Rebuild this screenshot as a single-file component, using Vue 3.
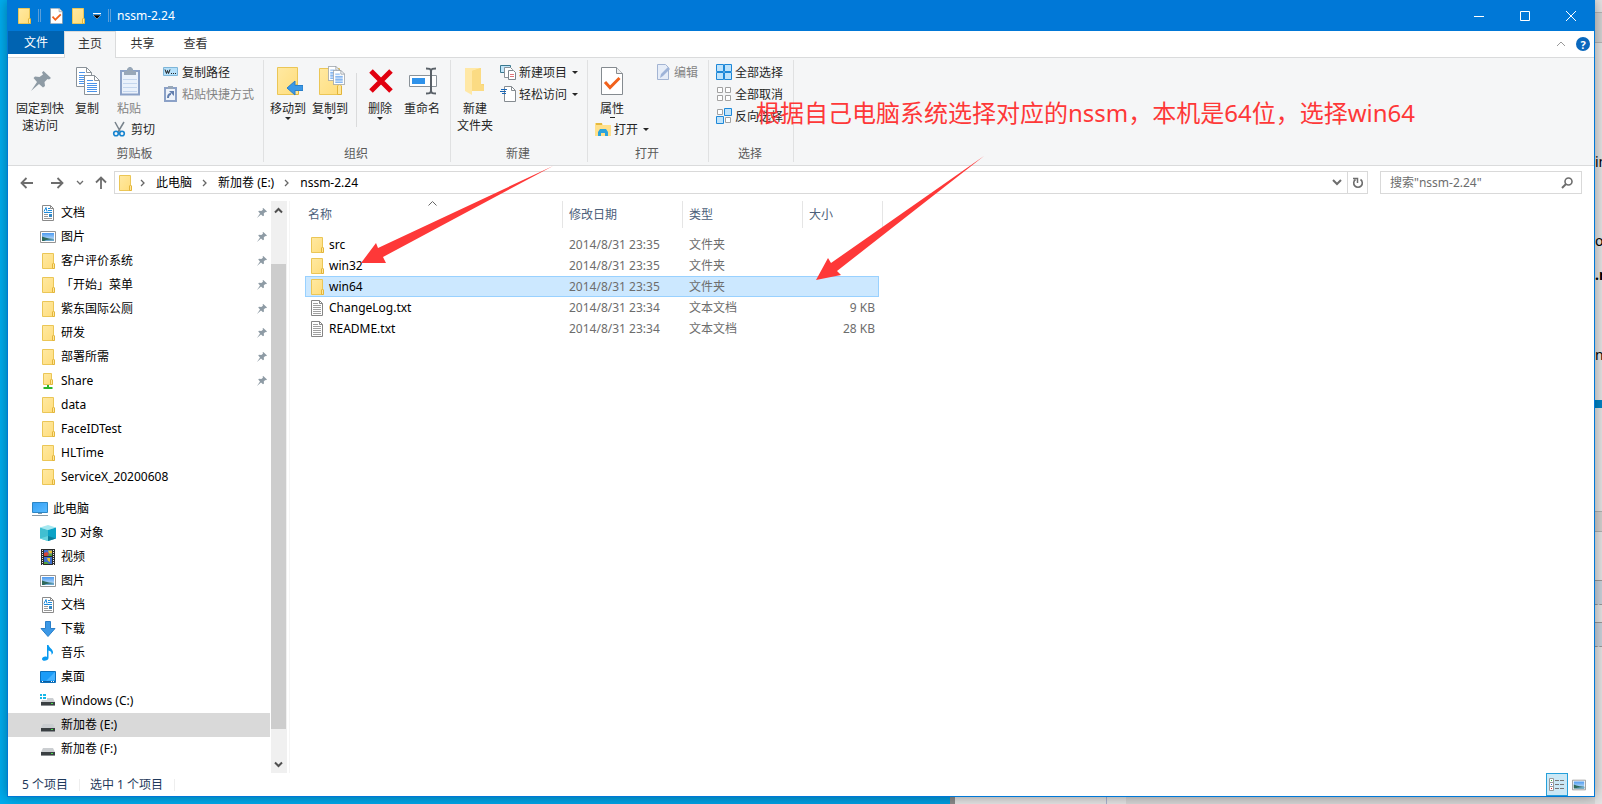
<script setup>
    import { ref } from 'vue'

    // 功能区选项卡
    const tabs = ['文件', '主页', '共享', '查看'];
    const activeTab = ref('主页');

    // 地址栏路径
    const crumbs = ['此电脑', '新加卷 (E:)', 'nssm-2.24'];
    const keyword = ref('');

    // 快速访问
    const quickItems = [
        { name: '文档', icon: 'doc', pinned: true },
        { name: '图片', icon: 'picture', pinned: true },
        { name: '客户评价系统', icon: 'folder', pinned: true },
        { name: '「开始」菜单', icon: 'folder', pinned: true },
        { name: '紫东国际公厕', icon: 'folder', pinned: true },
        { name: '研发', icon: 'folder', pinned: true },
        { name: '部署所需', icon: 'folder', pinned: true },
        { name: 'Share', icon: 'share', pinned: true },
        { name: 'data', icon: 'folder' },
        { name: 'FaceIDTest', icon: 'folder' },
        { name: 'HLTime', icon: 'folder' },
        { name: 'ServiceX_20200608', icon: 'folder' },
    ];

    // 此电脑
    const pcItems = [
        { name: '此电脑', icon: 'pc', root: true },
        { name: '3D 对象', icon: 'cube' },
        { name: '视频', icon: 'video' },
        { name: '图片', icon: 'picture' },
        { name: '文档', icon: 'doc' },
        { name: '下载', icon: 'download' },
        { name: '音乐', icon: 'music' },
        { name: '桌面', icon: 'desktop' },
        { name: 'Windows (C:)', icon: 'windisk' },
        { name: '新加卷 (E:)', icon: 'disk', current: true },
        { name: '新加卷 (F:)', icon: 'disk' },
    ];

    const files = [
        { name: 'src', icon: 'folder', date: '2014/8/31 23:35', type: '文件夹', size: '' },
        { name: 'win32', icon: 'folder', date: '2014/8/31 23:35', type: '文件夹', size: '' },
        { name: 'win64', icon: 'folder', date: '2014/8/31 23:35', type: '文件夹', size: '' },
        { name: 'ChangeLog.txt', icon: 'txt', date: '2014/8/31 23:34', type: '文本文档', size: '9 KB' },
        { name: 'README.txt', icon: 'txt', date: '2014/8/31 23:34', type: '文本文档', size: '28 KB' },
    ];
    const selected = ref('win64');
</script>

<template>
    <div class="screen">
        <!-- 图标定义 -->
        <svg class="defs" width="0" height="0" aria-hidden="true">
            <defs>
                <linearGradient id="g-folder" x1="0" y1="0" x2="1" y2="1">
                    <stop offset="0" stop-color="#ffe9a2" /><stop offset="1" stop-color="#ffdd7c" />
                </linearGradient>
                <linearGradient id="g-blue" x1="0" y1="0" x2="1" y2="1">
                    <stop offset="0" stop-color="#35a0f5" /><stop offset="1" stop-color="#5bbcff" />
                </linearGradient>
                <linearGradient id="g-sky" x1="0" y1="0" x2="0" y2="1">
                    <stop offset="0" stop-color="#4c9af0" /><stop offset="1" stop-color="#d6ecfb" />
                </linearGradient>
            </defs>
            <symbol id="folder" viewBox="0 0 16 16">
                <path d="M2.500 .5h11v10.500h.5v4.500H2.500z" fill="url(#g-folder)" stroke="#ebc656" />
                <path d="M12.500 15.500v-4.500l1-1 1 1v4.500z" fill="#ffe79a" stroke="#e3b53a" />
            </symbol>
            <symbol id="share" viewBox="0 0 16 16">
                <path d="M3.500.5h8v11h-8z" fill="url(#g-folder)" stroke="#ebc656" />
                <path d="M10.500 11.500V7l1-1 1 1v4.500z" fill="#ffe79a" stroke="#e3b53a" />
                <path d="M7 12h2v2h3.500v2h-9v-2H7z" fill="#2bb52b" />
            </symbol>
            <symbol id="doc" viewBox="0 0 16 16">
                <path d="M2.500.5h8l3 3v12h-11z" fill="#fff" stroke="#8a8a8a" />
                <path d="M10.500.5v3h3" fill="none" stroke="#8a8a8a" />
                <path d="M4 6.500l2-4 1 4M8 3.500h2M8 5.500h4M4 7.500h8" fill="none" stroke="#1d8bdb" />
                <path d="M4 9.500h4M4 11.500h4M4 13.500h8" stroke="#999" />
                <path d="M9 9h3v3H9z" fill="#3487c4" />
            </symbol>
            <symbol id="txt" viewBox="0 0 16 16">
                <path d="M2.500.5h8l3 3v12h-11z" fill="#fff" stroke="#858585" />
                <path d="M10.500.5v3h3" fill="none" stroke="#858585" />
                <path d="M4 3.500h5M4 5.500h8M4 7.500h8M4 9.500h8M4 11.500h8M4 13.500h8" stroke="#a0a0a0" />
            </symbol>
            <symbol id="picture" viewBox="0 0 16 16">
                <path d="M.5 2.500h15v11H.5z" fill="#fff" stroke="#949494" />
                <path d="M2 4h12v8H2z" fill="url(#g-sky)" />
                <path d="M2 7.500l3 1 4 1 5 .5v2H2z" fill="#2f6a5c" />
                <path d="M6 11l8-1v2H4z" fill="#6da9cf" />
            </symbol>
            <symbol id="pc" viewBox="0 0 16 16">
                <path d="M.5 1.500h15v10H.5z" fill="url(#g-blue)" stroke="#2c86c4" />
                <path d="M6 12h4v1H6z" fill="#7d98ab" />
                <path d="M0 14.500h16" stroke="#8799a6" />
            </symbol>
            <symbol id="cube" viewBox="0 0 16 16">
                <path d="M0 2.500L8 0l8 2.500L8 5z" fill="#a6e8f0" />
                <path d="M0 2.500L8 5v11l-8-2.500z" fill="#41bfd1" />
                <path d="M16 2.500L8 5v11l8-2.500z" fill="#0aa2c6" />
                <path d="M8 11l8 2.500L8 16z" fill="#087e9b" />
                <path d="M0 13.500L8 11v5z" fill="#67d3de" />
            </symbol>
            <symbol id="video" viewBox="0 0 16 16">
                <path d="M1 0h14v16H1z" fill="#2b2b2b" />
                <path d="M2.500 1v15M13.500 1v15" stroke="#eee" stroke-dasharray="1 1" />
                <path d="M4 1h8v6H4zM4 8h8v7H4z" fill="#3d6fd0" />
                <path d="M4 4l3-1 2 2-2 2H4z" fill="#d64538" />
                <path d="M8 1.500h4v3H9zM7 9h3v4l-2-1z" fill="#e6c32f" />
                <path d="M9 5h3v2H8zM4 13h3l2 2H4z" fill="#54a43b" />
            </symbol>
            <symbol id="download" viewBox="0 0 16 16">
                <path d="M5.500.5h5v7h4.500L8 15.500 1 7.500h4.500z" fill="#3b98e6" stroke="#2a7fc9" />
            </symbol>
            <symbol id="music" viewBox="0 0 16 16">
                <path d="M7 0h1.500c.5 3 5 4 4.500 8l-1.500 2c.5-3-1-4-3-4.500V13c0 3-6.500 4-6.500 1 0-2 3-3 5-2z" fill="#0a9af0" />
            </symbol>
            <symbol id="desktop" viewBox="0 0 16 16">
                <path d="M.5 2.500h15v11H.5z" fill="#1b9cf8" stroke="#0c6fbb" />
                <path d="M15 3v8L6 12z" fill="#45b2ff" />
                <path d="M1 12.500h14" stroke="#0b5d9f" />
                <path d="M2 12.500h1M11 12.500h1M13 12.500h1" stroke="#fff" />
            </symbol>
            <symbol id="disk" viewBox="0 0 16 16">
                <path d="M3 7h10l2 4H1z" fill="#cbced1" />
                <path d="M1 11h14v4H1z" fill="#3a3f42" />
                <path d="M1 14.500h14" stroke="#8b8f92" />
                <path d="M11 12.500h2" stroke="#4be04b" />
            </symbol>
            <symbol id="windisk" viewBox="0 0 16 16">
                <path d="M3 5h10l2 4H1z" fill="#cbced1" />
                <path d="M1 9h14v4H1z" fill="#3a3f42" />
                <path d="M1 12.500h14" stroke="#8b8f92" />
                <path d="M11 10.500h2" stroke="#4be04b" />
                <path d="M0 0h7v7H0z" fill="#fff" />
                <path d="M0 1h2v2H0zM3 1h3v2H3zM0 4h2v2H0zM3 4h3v2H3z" fill="#16b8e8" />
            </symbol>
            <symbol id="pin" viewBox="0 0 20 20">
                <path d="M12.500 0l7.500 7-2 1.500-1.500-.5-3 3 .5 4-2 1.500-4-3.500L0 20l6-9-3.500-4L4 5.500l4.500.5L12 3.500 11 1.500z" fill="#8e9ba5" />
            </symbol>
            <symbol id="checkdoc" viewBox="0 0 22 28">
                <path d="M.5.5h15l6 6v21H.5z" fill="#fff" stroke="#858b90" />
                <path d="M15.500.5v6h6" fill="#eee" stroke="#858b90" />
                <path d="M4 15l5 5.500 9.500-9.500" fill="none" stroke="#f1611c" stroke-width="3" />
            </symbol>
            <symbol id="page" viewBox="0 0 16 20">
                <path d="M.5.5h10l5 5v14H.5z" fill="#fff" stroke="#8a9299" />
                <path d="M10.500.5v5h5" fill="none" stroke="#8a9299" />
                <path d="M3 5.500h6M3 8.500h10M3 10.500h10M3 12.500h10M3 14.500h10M3 16.500h10" stroke="#4a93ea" />
            </symbol>
            <symbol id="clip" viewBox="0 0 20 30">
                <path d="M1 5h18v23.500H1z" fill="#eaf1fb" stroke="#8ba1c7" stroke-width="2" />
                <path d="M4 9V5h3V3l2-2h2l2 2v2h3v4z" fill="#98a7b8" />
                <path d="M3 13.500h14M3 17.500h14M3 21.500h14M3 25.500h14" stroke="#c4d6ee" />
            </symbol>
        </svg>

        <!-- 后面的窗口 -->
        <div class="back-window">
            <div class="back-side">
                <span class="frag frag-a">in</span>
                <span class="frag frag-b">o</span>
                <span class="frag frag-c">.n</span>
                <span class="frag frag-d">ne</span>
                <i class="band band-top"></i>
                <i class="band band-blue"></i>
                <i class="band band-gray"></i>
                <i class="band band-row1"></i>
                <i class="band band-row2"></i>
            </div>
        </div>

        <main class="explorer">
            <header class="title-bar">
                <svg class="icon" aria-hidden="true"><use href="#folder" /></svg>
                <i class="title-sep"></i>
                <button class="quick" aria-label="属性"><svg width="13" height="16"><use href="#checkdoc" /></svg></button>
                <button class="quick" aria-label="新建文件夹"><svg class="icon"><use href="#folder" /></svg></button>
                <button class="quick" aria-label="自定义"><svg width="8" height="8"><path d="M0 1.500h8" stroke="#fff" /><path d="M0 3h8L4 7z" fill="#000" stroke="#fff" stroke-width=".4" /></svg></button>
                <i class="title-sep"></i>
                <h1>nssm-2.24</h1>
                <div class="win-buttons">
                    <button aria-label="最小化"><svg width="10" height="10"><path d="M0 5.500h10" stroke="#fff" /></svg></button>
                    <button aria-label="最大化"><svg width="10" height="10"><path d="M.5.500h9v9h-9z" fill="none" stroke="#fff" /></svg></button>
                    <button aria-label="关闭"><svg width="10" height="10"><path d="M0 0l10 10M10 0L0 10" stroke="#fff" /></svg></button>
                </div>
            </header>

            <nav class="tabs">
                <button v-for="tab in tabs" :key="tab" class="tab" :class="{ file: tab === '文件', active: tab === activeTab }" @click="activeTab = tab">{{ tab }}</button>
                <div class="tabs-right">
                    <button aria-label="折叠"><svg width="10" height="6"><path d="M1 5l4-4 4 4" fill="none" stroke="#999" /></svg></button>
                    <button class="help" aria-label="帮助">?</button>
                </div>
            </nav>

            <section class="ribbon">
                <div class="group g-clipboard">
                    <div class="group-body">
                        <button class="big wide">
                            <span class="big-icon"><svg width="20" height="20"><use href="#pin" /></svg></span>
                            <span>固定到快<br>速访问</span>
                        </button>
                        <button class="big">
                            <span class="big-icon">
                                <svg width="24" height="28"><use href="#page" width="16" height="20" /><use href="#page" x="8" y="8" width="16" height="20" /></svg>
                            </span>
                            <span>复制</span>
                        </button>
                        <div class="stack">
                            <button class="big muted">
                                <span class="big-icon"><svg width="20" height="30"><use href="#clip" /></svg></span>
                                <span>粘贴</span>
                            </button>
                            <button class="small">
                                <svg class="icon"><path d="M3 1l5.500 10M12 1L6 11" stroke="#77828b" stroke-width="1.500" /><circle cx="4" cy="12.500" r="2.300" fill="none" stroke="#1683cf" stroke-width="1.600" /><circle cx="10" cy="12.500" r="2.300" fill="none" stroke="#1683cf" stroke-width="1.600" /></svg>
                                <span>剪切</span>
                            </button>
                        </div>
                        <div class="stack rows">
                            <button class="small">
                                <svg class="icon"><path d="M.5 3.500h14v8H.5z" fill="#b5e0fa" stroke="#7db5d8" /><path d="M2 5.500l1.500 4 1-3 1 3 1.500-4M8 9.500h1M10 9.500h1M12 9.500h1" fill="none" stroke="#222" /></svg>
                                <span>复制路径</span>
                            </button>
                            <button class="small muted">
                                <svg class="icon"><path d="M2 2h11v13H2z" fill="#eef3fa" stroke="#8ba1c7" stroke-width="2" /><path d="M5 0h5v3H5z" fill="#98a7b8" /><path d="M5 12c0-3 1-4 3-4" fill="none" stroke="#637fae" stroke-width="2" /><path d="M6 5h5v5z" fill="#637fae" /></svg>
                                <span>粘贴快捷方式</span>
                            </button>
                        </div>
                    </div>
                    <div class="group-name">剪贴板</div>
                </div>

                <div class="group g-organize">
                    <div class="group-body">
                        <button class="big">
                            <span class="big-icon">
                                <svg width="28" height="30"><path d="M2.500 1.500h20v27h-20z" fill="url(#g-folder)" stroke="#ebc656" /><path d="M19.500 28.500V20l2-2 2 2v8.500z" fill="#ffe79a" stroke="#e3b53a" /><path d="M12 22l8-7v4.500h8v5h-8V29z" fill="#3b98e6" stroke="#2a7fc9" /></svg>
                            </span>
                            <span>移动到</span><i class="caret"></i>
                        </button>
                        <button class="big">
                            <span class="big-icon">
                                <svg width="28" height="30"><path d="M2.500 2.500h20v26h-20z" fill="url(#g-folder)" stroke="#ebc656" /><path d="M20.500 28.500V20l2-2 2 2v8.500z" fill="#ffe79a" stroke="#e3b53a" /><use href="#page" x="11" y="0" width="12" height="15" /><use href="#page" x="16" y="4" width="12" height="15" /></svg>
                            </span>
                            <span>复制到</span><i class="caret"></i>
                        </button>
                        <i class="inner-sep"></i>
                        <button class="big delete">
                            <span class="big-icon"><svg width="24" height="24"><path d="M2 2l20 20M22 2L2 22" stroke="#e1000f" stroke-width="5" /></svg></span>
                            <span>删除</span><i class="caret"></i>
                        </button>
                        <button class="big mid">
                            <span class="big-icon">
                                <svg width="28" height="28"><path d="M.5 8.500h27v11H.5z" fill="#fff" stroke="#8a9299" /><path d="M3 11h13v6H3z" fill="#2f92ea" /><path d="M17 1.500c3 0 5 0 5 3 0-3 2-3 5-3M22 3v22M17 26.500c3 0 5 0 5-3 0 3 2 3 5 3" fill="none" stroke="#5a6168" stroke-width="2" /></svg>
                            </span>
                            <span>重命名</span>
                        </button>
                    </div>
                    <div class="group-name">组织</div>
                </div>

                <div class="group g-new">
                    <div class="group-body">
                        <button class="big mid">
                            <span class="big-icon">
                                <svg width="20" height="28"><path d="M5 1h11v16h3v7H5z" fill="#f8d575" /><path d="M0 1h16l-9 3v24l-7-4z" fill="#ffe8a6" /><path d="M7 4l9-3v16l3 2v5H7z" fill="#fbdb83" /></svg>
                            </span>
                            <span>新建<br>文件夹</span>
                        </button>
                        <div class="stack rows">
                            <button class="small">
                                <svg class="icon"><path d="M.5 1.500h10v7H.5z" fill="#c2e6fa" stroke="#39788f" /><path d="M4.500 3.500h6l2 2v8h-8z" fill="#fff" stroke="#8a9299" /><path d="M8.500 6.500h5l2 2v7h-7z" fill="#fff" stroke="#7c858c" /><path d="M10 10.500h4M10 12.500h4" stroke="#e0777c" /></svg>
                                <span>新建项目</span><i class="caret"></i>
                            </button>
                            <button class="small">
                                <svg class="icon"><path d="M4.500.5h7l4 4v11h-11z" fill="#fff" stroke="#858b90" /><path d="M11.500.5v4h4" fill="none" stroke="#858b90" /><path d="M1 3.500h6M0 5.500h6M2 7.500h4" stroke="#1a66b5" /></svg>
                                <span>轻松访问</span><i class="caret"></i>
                            </button>
                        </div>
                    </div>
                    <div class="group-name">新建</div>
                </div>

                <div class="group g-open">
                    <div class="group-body">
                        <div class="stack">
                            <button class="big">
                                <span class="big-icon"><svg width="22" height="28"><use href="#checkdoc" /></svg></span>
                                <span>属性</span><i class="caret thin"></i>
                            </button>
                            <button class="small">
                                <svg class="icon"><path d="M0 2h7l1 2h8v11H0z" fill="#ffe08a" /><path d="M1 2h6v2H1z" fill="#e5b93f" /><path d="M3 15v-4l2-3h6l2 3v4h-3v-3H6v3z" fill="#2ba3dc" /></svg>
                                <span>打开</span><i class="caret"></i>
                            </button>
                        </div>
                        <div class="stack rows">
                            <button class="small muted">
                                <svg class="icon"><path d="M2.500.5h8l3 3v12h-11z" fill="#e6edf8" stroke="#a3b4d3" /><path d="M5 14l1-4 7-7 2 2-7 7z" fill="#9eb3d8" /></svg>
                                <span>编辑</span>
                            </button>
                        </div>
                    </div>
                    <div class="group-name">打开</div>
                </div>

                <div class="group g-select">
                    <div class="group-body">
                        <div class="stack rows">
                            <button class="small">
                                <svg class="icon"><path d="M.5.500h7v7h-7zM8.500.500h7v7h-7zM.5 8.500h7v7h-7zM8.500 8.500h7v7h-7z" fill="#bfe3fb" stroke="#1e88d8" /></svg>
                                <span>全部选择</span>
                            </button>
                            <button class="small">
                                <svg class="icon"><path d="M1.500 1.500h5v5h-5zM9.500 1.500h5v5h-5zM1.500 9.500h5v5h-5zM9.500 9.500h5v5h-5z" fill="#fff" stroke="#a2a2a2" /></svg>
                                <span>全部取消</span>
                            </button>
                            <button class="small">
                                <svg class="icon"><path d="M1.500 1.500h5v5h-5zM9.500 9.500h5v5h-5z" fill="#fff" stroke="#a2a2a2" /><path d="M8.500.500h7v7h-7zM.5 8.500h7v7h-7z" fill="#bfe3fb" stroke="#1e88d8" /></svg>
                                <span>反向选择</span>
                            </button>
                        </div>
                    </div>
                    <div class="group-name">选择</div>
                </div>
            </section>

            <section class="address-row">
                <button class="nav-btn" aria-label="后退"><svg width="14" height="12"><path d="M13 6H2M6.500 1L1.500 6l5 5" fill="none" stroke="#6d6d6d" stroke-width="1.800" /></svg></button>
                <button class="nav-btn" aria-label="前进"><svg width="14" height="12"><path d="M1 6h11M7.500 1l5 5-5 5" fill="none" stroke="#6d6d6d" stroke-width="1.800" /></svg></button>
                <button class="nav-btn recent" aria-label="最近"><svg width="8" height="6"><path d="M1 1l3 3 3-3" fill="none" stroke="#6d6d6d" stroke-width="1.300" /></svg></button>
                <button class="nav-btn up" aria-label="向上"><svg width="12" height="14"><path d="M6 13V2M1 6.500l5-5 5 5" fill="none" stroke="#6d6d6d" stroke-width="1.800" /></svg></button>
                <div class="address">
                    <svg class="icon"><use href="#folder" /></svg>
                    <template v-for="c in crumbs" :key="c">
                        <svg class="chev" width="6" height="8"><path d="M1 1l3 3-3 3" fill="none" stroke="#666" stroke-width="1.300" /></svg>
                        <a href="#">{{ c }}</a>
                    </template>
                    <button class="drop" aria-label="历史"><svg width="10" height="7"><path d="M1 1l4 4 4-4" fill="none" stroke="#6d6d6d" stroke-width="2" /></svg></button>
                    <button class="refresh" aria-label="刷新"><svg width="12" height="12"><path d="M8.500 2.500A4.300 4.300 0 1 1 3.500 2.500" fill="none" stroke="#6d6d6d" stroke-width="1.600" /><path d="M1 1.500h4.500V6" fill="none" stroke="#6d6d6d" stroke-width="1.500" /></svg></button>
                </div>
                <label class="search">
                    <input v-model="keyword" type="text" placeholder='搜索"nssm-2.24"' aria-label="搜索">
                    <svg width="12" height="12"><circle cx="7.500" cy="4.500" r="3.500" fill="none" stroke="#6d6d6d" stroke-width="1.600" /><path d="M5 7L1 11" stroke="#6d6d6d" stroke-width="2" /></svg>
                </label>
            </section>

            <section class="content">
                <aside class="side">
                    <ul v-for="(list, i) in [quickItems, pcItems]" :key="i">
                        <li v-for="item in list" :key="item.name" :class="{ root: item.root, current: item.current }">
                            <a href="#">
                                <svg class="icon"><use :href="'#' + item.icon" /></svg>
                                <span>{{ item.name }}</span>
                                <svg v-if="item.pinned" class="pin" width="10" height="10"><use href="#pin" /></svg>
                            </a>
                        </li>
                    </ul>
                </aside>
                <div class="scrollbar">
                    <svg width="9" height="7"><path d="M1 5.500L4.500 2 8 5.500" fill="none" stroke="#505050" stroke-width="2" /></svg>
                    <div class="track"><div class="thumb"></div></div>
                    <svg width="9" height="7"><path d="M1 1.500L4.500 5 8 1.500" fill="none" stroke="#505050" stroke-width="2" /></svg>
                </div>

                <div class="files">
                    <table>
                        <thead>
                            <tr>
                                <th class="c-name">名称<svg class="sort" width="9" height="5"><path d="M.5 4.500l4-4 4 4" fill="none" stroke="#666" /></svg></th>
                                <th class="c-date">修改日期</th>
                                <th class="c-type">类型</th>
                                <th class="c-size">大小</th>
                                <th class="c-edge"></th>
                            </tr>
                        </thead>
                        <tbody>
                            <tr v-for="f in files" :key="f.name" :class="{ selected: f.name === selected }" @click="selected = f.name">
                                <td><div class="file"><svg class="icon"><use :href="'#' + f.icon" /></svg>{{ f.name }}</div></td>
                                <td>{{ f.date }}</td>
                                <td>{{ f.type }}</td>
                                <td class="size">{{ f.size }}</td>
                            </tr>
                        </tbody>
                    </table>
                </div>
            </section>

            <footer class="status">
                <span>5 个项目</span>
                <span>选中 1 个项目</span>
                <div class="views">
                    <button class="on" aria-label="详细信息"><svg width="16" height="14"><path d="M.5.500h4v4h-4zM.5 4.500h4v4h-4zM.5 8.500h4v4h-4z" fill="#fff" stroke="#999" /><path d="M2 2.500h1" stroke="#3a3" /><path d="M2 6.500h1" stroke="#36c" /><path d="M2 10.500h1" stroke="#d22" /><path d="M6 2.500h4M11 2.500h4M6 6.500h4M11 6.500h4M6 10.500h4M11 10.500h4" stroke="#777" /></svg></button>
                    <button aria-label="大缩略图"><svg width="14" height="14" viewBox="0 0 16 16"><use href="#picture" /></svg></button>
                </div>
            </footer>
        </main>

        <!-- 红色标注 -->
        <div class="note">根据自己电脑系统选择对应的nssm，本机是64位，选择win64</div>
        <svg class="arrows" width="1000" height="300" aria-hidden="true">
            <path d="M361 263l15-20 2 5L553 166 383 257l3 6z" />
            <path d="M816 280l12-22 3 5L984 156 837 271l4 4z" />
        </svg>
    </div>
</template>

<style>
    body {
        margin: 0;
        overflow: hidden;
    }
</style>

<style scoped>
    .screen {
        position: relative;
        display: flex;
        box-sizing: border-box;
        height: 100vh;
        padding: 0 7px 7px;
        overflow: hidden;
        background: linear-gradient(to right, #00adef, #0092d8);
        font-family: "Noto Sans", "Noto Sans CJK SC", sans-serif;
        font-size: 12px;
        line-height: 17px;
        color: #000;
    }

    .screen * {
        box-sizing: border-box;
    }

    .defs {
        position: absolute;
    }

    svg {
        display: block;
        flex: none;
    }

    .icon {
        width: 16px;
        height: 16px;
    }

    button {
        display: flex;
        align-items: center;
        justify-content: center;
        margin: 0;
        padding: 0;
        border: none;
        background: none;
        font: inherit;
        color: inherit;
    }

    a {
        color: inherit;
        text-decoration: none;
    }

    /* 后面的窗口 */
    .back-window {
        position: absolute;
        top: 0;
        right: 0;
        bottom: 0;
        left: 950px;
        border-left: 5px solid #8b8b8b;
        background: linear-gradient(to right, #e4e4e4 151px, #a9b3d0 151px, #a9b3d0 152px, #e4e4e4 152px, #e4e4e4 171px, #d6d6d6 171px);
    }

    .back-side {
        position: absolute;
        top: 0;
        right: 0;
        width: 7px;
        height: 100%;
        overflow: hidden;
        background: #e3e3e3;
    }

    .frag {
        position: absolute;
        left: 0;
        font-size: 14px;
    }

    .frag-a { top: 153px; }
    .frag-b { top: 232px; }
    .frag-c { top: 266px; font-weight: bold; }
    .frag-d { top: 346px; }

    .band {
        position: absolute;
        left: 0;
        width: 100%;
    }

    .band-top {
        top: 12px;
        height: 31px;
        border: solid #b5b5b5;
        border-width: 1px 0;
        background: #d3d3d3;
    }

    .band-blue {
        top: 400px;
        height: 8px;
        background: #0083c4;
    }

    .band-gray {
        top: 511px;
        height: 21px;
        border: solid #b0b0b0;
        border-width: 1px 0;
        background: #d2d0ce;
    }

    .band-row1,
    .band-row2 {
        top: 580px;
        height: 25px;
        border-top: 1px solid #999;
        border-bottom: 1px dashed #999;
        background: #c9d1da;
    }

    .band-row2 {
        top: 622px;
    }

    /* 资源管理器窗口 */
    .explorer {
        position: relative;
        display: flex;
        flex: 1;
        flex-direction: column;
        min-width: 0;
        border: solid #0078d7;
        border-width: 0 1px 1px;
        background: #fff;
        box-shadow: 0 0 12px rgba(0, 0, 0, .35);
    }

    .title-bar {
        display: flex;
        align-items: center;
        height: 31px;
        padding-left: 8px;
        background: #0078d7;
        color: #fff;
    }

    .title-sep {
        width: 3px;
        height: 13px;
        margin: 0 9px 0 6px;
        border: solid #5b9fda;
        border-width: 0 1px;
    }

    .quick {
        margin-right: 7px;
    }

    .quick + .title-sep {
        margin: 0 6px 0 0;
    }

    h1 {
        margin: 0;
        font-size: 12px;
        font-weight: normal;
    }

    .win-buttons {
        display: flex;
        margin-left: auto;
    }

    .win-buttons button {
        width: 46px;
        height: 31px;
    }

    .tabs {
        display: flex;
        height: 27px;
        border-bottom: 1px solid #dadbdc;
    }

    .tab {
        width: 53px;
        height: 24px;
        color: #333;
    }

    .tab.file {
        width: 56px;
        height: 23px;
        background: #0063b1;
        color: #fff;
    }

    .tab.active {
        width: 52px;
        height: 27px;
        padding-bottom: 3px;
        border: solid #dadbdc;
        border-width: 1px 1px 0;
        background: #f5f6f7;
    }

    .tabs-right {
        display: flex;
        align-items: center;
        gap: 10px;
        margin-left: auto;
        padding-right: 4px;
    }

    .help {
        width: 14px;
        height: 14px;
        border-radius: 50%;
        background: #0a68bd;
        color: #fff;
        font-size: 11px;
        font-weight: bold;
    }

    /* 功能区 */
    .ribbon {
        display: flex;
        height: 108px;
        border-bottom: 1px solid #dadbdc;
        background: #f5f6f7;
    }

    .group {
        display: flex;
        flex-direction: column;
        margin: 2px 0 3px;
        padding-top: 1px;
        border-right: 1px solid #e0e1e2;
    }

    .g-clipboard { width: 256px; }
    .g-organize { width: 187px; }
    .g-new { width: 137px; }
    .g-open { width: 121px; }
    .g-select { width: 85px; }

    .group-body {
        display: flex;
        flex: 1;
        align-items: flex-start;
        padding-left: 3px;
    }

    .g-clipboard .group-body {
        padding-left: 6px;
    }

    .g-new .group-body {
        padding-left: 1px;
    }

    .group-name {
        height: 17px;
        padding-right: 2px;
        text-align: center;
        color: #5a5a5a;
    }

    .big {
        position: relative;
        flex-direction: column;
        justify-content: flex-start;
        width: 42px;
        color: #262626;
        white-space: nowrap;
    }

    .big.wide { width: 52px; }
    .big.mid { width: 46px; }
    .big.delete { width: 38px; }

    .big-icon {
        display: flex;
        align-items: center;
        justify-content: center;
        height: 39px;
    }

    .g-clipboard .big-icon,
    .g-organize .big-icon {
        padding-left: 2px;
    }

    .big.muted,
    .small.muted {
        color: #838383;
    }

    .stack {
        display: flex;
        flex-direction: column;
        align-items: flex-start;
    }

    .stack .big {
        height: 57px;
    }

    .g-clipboard .rows {
        padding-left: 4px;
    }

    .g-open .rows {
        padding-left: 2px;
    }

    .small {
        gap: 3px;
        height: 22px;
        padding-left: 4px;
        color: #262626;
        white-space: nowrap;
    }

    .g-new .small {
        padding-left: 2px;
    }

    .caret {
        border: 3px solid transparent;
        border-top-color: #262626;
        border-bottom: none;
    }

    .small .caret {
        margin-left: 2px;
    }

    .big .caret {
        position: absolute;
        top: 56px;
    }

    .big .caret.thin {
        width: 5px;
        border: none;
        border-top: 1px solid #262626;
    }

    .inner-sep {
        height: 54px;
        margin: 12px 4px 0 5px;
        border-left: 1px solid #dadbdc;
    }

    /* 地址栏 */
    .address-row {
        display: flex;
        align-items: center;
        height: 35px;
        padding: 5px 12px 7px 4px;
    }

    .nav-btn {
        width: 30px;
        height: 23px;
    }

    .nav-btn.recent {
        width: 16px;
    }

    .nav-btn.up {
        width: 26px;
    }

    .address {
        display: flex;
        flex: 1;
        align-items: center;
        height: 23px;
        border: 1px solid #d9d9d9;
        padding-left: 2px;
    }

    .chev {
        margin: 0 10px 0 7px;
    }

    a + .chev {
        margin-left: 10px;
    }

    .drop {
        width: 20px;
        margin-left: auto;
    }

    .refresh {
        width: 20px;
        height: 21px;
        border-left: 1px solid #d9d9d9;
    }

    .search {
        display: flex;
        align-items: center;
        width: 202px;
        height: 23px;
        margin-left: 12px;
        padding: 0 8px 0 9px;
        border: 1px solid #d9d9d9;
    }

    .search input {
        flex: 1;
        min-width: 0;
        padding: 0;
        border: none;
        outline: none;
        font: inherit;
    }

    .search input::placeholder {
        color: #6d6d6d;
        opacity: 1;
    }

    /* 主体 */
    .content {
        display: flex;
        flex: 1;
        min-height: 0;
    }

    .side {
        width: 263px;
    }

    ul {
        margin: 0 0 8px;
        padding: 0;
        list-style: none;
    }

    li a {
        display: flex;
        align-items: center;
        gap: 5px;
        height: 24px;
        margin-right: 1px;
        padding: 0 3px 0 32px;
    }

    li a span {
        padding-bottom: 2px;
    }

    li.root a {
        padding-left: 24px;
    }

    li.current a {
        background: #d9d9d9;
    }

    .pin {
        margin-left: auto;
    }

    .scrollbar {
        display: flex;
        flex-direction: column;
        align-items: center;
        width: 16px;
        padding: 6px 1px 5px 0;
        background: #f0f0f0;
    }

    .track {
        flex: 1;
        width: 100%;
        padding: 50px 0 32px;
    }

    .thumb {
        height: 100%;
        background: #cdcdcd;
    }

    .files {
        flex: 1;
        margin-left: 2px;
        padding-left: 15px;
        border-left: 1px solid #f5f5f5;
    }

    table {
        border-spacing: 0;
        table-layout: fixed;
        width: 578px;
    }

    th {
        position: relative;
        height: 27px;
        padding: 0 0 0 6px;
        border-right: 1px solid #e5e5e5;
        font-weight: normal;
        text-align: left;
        color: #4c607a;
    }

    thead::after {
        content: "";
        display: block;
        height: 6px;
    }

    .c-name {
        width: 258px;
        padding-left: 3px;
    }

    .c-date,
    .c-type {
        width: 120px;
    }

    .c-size {
        width: 76px;
        border-right: none;
    }

    .c-edge {
        width: 4px;
        padding: 0;
    }

    .sort {
        position: absolute;
        top: 0;
        left: 123px;
    }

    td {
        height: 21px;
        padding: 0 0 0 6px;
        border: solid transparent;
        border-width: 1px 0;
        line-height: 19px;
        color: #6d6d6d;
    }

    td:first-child {
        padding-left: 3px;
        border-left-width: 1px;
        color: #000;
    }

    td.size {
        padding-right: 3px;
        border-right-width: 1px;
        text-align: right;
    }

    .selected td {
        border-color: #99d1ff;
        background: #cce8ff;
    }

    .file {
        display: flex;
        align-items: center;
        gap: 4px;
    }

    /* 状态栏 */
    .status {
        display: flex;
        align-items: center;
        height: 23px;
        padding-left: 14px;
        color: #1e395b;
    }

    .status span {
        margin-right: 10px;
        padding-right: 11px;
        border-right: 1px solid #eee;
        line-height: 12px;
    }

    .views {
        display: flex;
        margin-left: auto;
        padding-right: 4px;
    }

    .views button {
        width: 22px;
        height: 23px;
    }

    .views .on {
        border: 1px solid #26a0da;
        background: #cbe8f6;
    }

    /* 标注 */
    .note {
        position: absolute;
        top: 96px;
        left: 756px;
        font-size: 24px;
        line-height: 34px;
        white-space: nowrap;
        color: #fe3838;
    }

    .arrows {
        position: absolute;
        top: 0;
        left: 0;
        fill: #fe3838;
        pointer-events: none;
    }
</style>
